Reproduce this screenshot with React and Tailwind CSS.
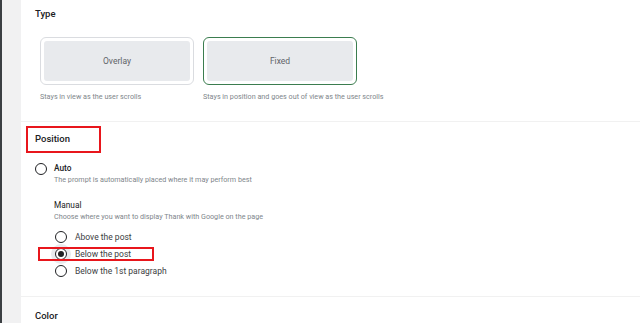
const font = { fontFamily: "Roboto, 'Noto Sans', sans-serif" };

function Radio({ checked }) {
  return (
    <span className="relative flex h-[12px] w-[12px] shrink-0 items-center justify-center">
      {checked && <span className="absolute -inset-[4px] rounded-full bg-[#e8eaed]" />}
      <span className="relative flex h-[12px] w-[12px] items-center justify-center rounded-full border-[1.5px] border-[#202124] bg-white">
        {checked && <span className="h-[6px] w-[6px] rounded-full bg-[#202124]" />}
      </span>
    </span>
  );
}

function TypeCard({ label, selected, caption }) {
  return (
    <div className="flex flex-col">
      <div
        className={
          selected
            ? "h-[48px] w-[154px] rounded-[6px] border-[1.5px] border-[#3b7d4f] p-[3px]"
            : "h-[48px] w-[154px] rounded-[6px] border border-[#dadce0] p-[3px]"
        }
      >
        <div className="flex h-full items-center justify-center rounded-[3px] bg-[#e8eaed] text-[8.5px] text-[#5f6368]">
          {label}
        </div>
      </div>
      <div className="mt-[7px] text-[7.2px] leading-[9px] text-[#80868b]">{caption}</div>
    </div>
  );
}

export default function App() {
  const options = ["Above the post", "Below the post", "Below the 1st paragraph"];
  return (
    <div className="flex h-[323px] w-[640px] overflow-hidden bg-white" style={font}>
      <div className="w-[2px] bg-[#3c4043]" />
      <div className="w-[19px] bg-[#f1f1f2]" />
      <div className="flex-1">
        {/* Type */}
        <div className="border-b border-[#f1f1f1] pb-[20px]">
          <div className="pl-[14px] pt-[7px] text-[9.5px] font-medium leading-[14px] text-[#202124]">Type</div>
          <div className="mt-[16px] flex gap-[9px] pl-[19px]">
            <TypeCard label="Overlay" caption="Stays in view as the user scrolls" />
            <TypeCard label="Fixed" selected caption="Stays in position and goes out of view as the user scrolls" />
          </div>
        </div>

        {/* Position */}
        <div className="border-b border-[#f1f1f1] pb-[19px]">
          <div className="ml-[5px] mt-[4px] flex h-[27px] w-[75px] items-center border-2 border-[#e8161c] pl-[7px] text-[9.5px] font-medium text-[#202124]">
            Position
          </div>
          <div className="mt-[10px] flex items-start gap-[7px] pl-[14px]">
            <Radio />
            <div>
              <div className="text-[8.3px] font-medium leading-[11px] text-[#202124]">Auto</div>
              <div className="mt-[1px] text-[7.2px] leading-[9px] text-[#80868b]">
                The prompt is automatically placed where it may perform best
              </div>
            </div>
          </div>
          <div className="mt-[16px] pl-[33px]">
            <div className="text-[8.3px] leading-[11px] text-[#202124]">Manual</div>
            <div className="mt-[1px] text-[7.2px] leading-[9px] text-[#80868b]">
              Choose where you want to display Thank with Google on the page
            </div>
          </div>
          <div className="mt-[10px] flex flex-col gap-[5px] pl-[34px]">
            {options.map((o, i) => (
              <div key={o} className="relative flex h-[12px] items-center gap-[8px]">
                <Radio checked={i === 1} />
                <span className="relative text-[8.5px] text-[#3c4043]">{o}</span>
                {i === 1 && (
                  <span className="absolute -left-[17px] -top-[1px] h-[14px] w-[116px] border-2 border-[#e8161c]" />
                )}
              </div>
            ))}
          </div>
        </div>

        {/* Color */}
        <div className="pl-[14px] pt-[12px] text-[9.5px] font-medium leading-[14px] text-[#202124]">Color</div>
      </div>
    </div>
  );
}
